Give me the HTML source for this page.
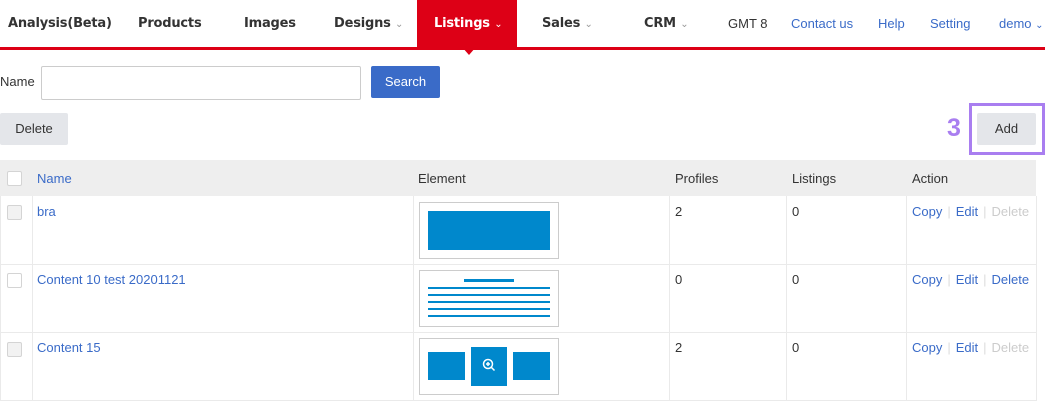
<!DOCTYPE html>
<html><head><meta charset="utf-8"><style>
*{margin:0;padding:0;box-sizing:border-box}
body{width:1045px;height:401px;background:#fff;font-family:"Liberation Sans",sans-serif;font-size:13px;color:#333;position:relative;overflow:hidden}
.a{position:absolute;white-space:nowrap}
.nav{font-family:"DejaVu Sans",sans-serif;font-weight:bold;font-size:13px;color:#333;top:16px;letter-spacing:-0.2px}
.car{font-weight:normal;color:#999;font-size:10px}
.lk{color:#3a6bc8;font-size:13px;top:16px}
.hl{position:absolute;background:#eaeaea}
.cb{position:absolute;width:15px;height:15px;border:1px solid #d4d4d4;border-radius:2px;background:#fff}
.cbd{background:#f2f2f2}
.th{position:absolute;border:1px solid #ccc;background:#fff;width:140px;height:57px}
.b{position:absolute;background:#0088cc}
.ac{color:#3a6bc8}
.sep{color:#ddd;margin:0 5px}
.dis{color:#ccc}
</style></head><body>
<div class="a nav" style="left:8px">Analysis(Beta)</div>
<div class="a nav" style="left:138px">Products</div>
<div class="a nav" style="left:244px">Images</div>
<div class="a nav" style="left:334px">Designs <span class="car">&#8964;</span></div>
<div class="a" style="left:417px;top:0;width:100px;height:48px;background:#dd0016"></div>
<div class="a" style="left:462px;top:47px;width:0;height:0;border-left:7px solid transparent;border-right:7px solid transparent;border-top:8px solid #dd0016"></div>
<div class="a nav" style="left:434px;color:#fff">Listings <span style="font-size:10px;font-weight:normal">&#8964;</span></div>
<div class="a nav" style="left:542px">Sales <span class="car">&#8964;</span></div>
<div class="a nav" style="left:644px">CRM <span class="car">&#8964;</span></div>
<div class="a" style="left:728px;top:16px;color:#333">GMT 8</div>
<div class="a lk" style="left:791px">Contact us</div>
<div class="a lk" style="left:878px">Help</div>
<div class="a lk" style="left:930px">Setting</div>
<div class="a lk" style="left:999px">demo <span style="font-size:10px">&#8964;</span></div>
<div class="a" style="left:0;top:47px;width:1045px;height:3px;background:#dd0016"></div>
<div class="a" style="left:417px;top:46px;width:100px;height:4px;background:#dd0016"></div>

<div class="a" style="left:0;top:74px">Name</div>
<div class="a" style="left:41px;top:66px;width:320px;height:34px;border:1px solid #ccc;border-radius:2px"></div>
<div class="a" style="left:371px;top:66px;width:69px;height:32px;background:#3a6bc8;color:#fff;text-align:center;line-height:31px;border-radius:2px">Search</div>
<div class="a" style="left:0;top:113px;width:68px;height:32px;background:#e4e6ea;text-align:center;line-height:32px;border-radius:2px">Delete</div>
<div class="a" style="left:947px;top:114px;color:#a97ef0;font-size:25px;font-weight:bold;line-height:28px">3</div>
<div class="a" style="left:969px;top:103px;width:76px;height:52px;border:3px solid #a97ef0"></div>
<div class="a" style="left:977px;top:113px;width:59px;height:32px;background:#e4e6ea;text-align:center;line-height:32px;border-radius:2px">Add</div>

<div class="a" style="left:0;top:160px;width:1036px;height:36px;background:#eee"></div>
<div class="cb" style="left:7px;top:171px"></div>
<div class="a ac" style="left:37px;top:171px">Name</div>
<div class="a" style="left:418px;top:171px">Element</div>
<div class="a" style="left:675px;top:171px">Profiles</div>
<div class="a" style="left:792px;top:171px">Listings</div>
<div class="a" style="left:912px;top:171px">Action</div>

<div class="hl" style="left:0;top:264px;width:1036px;height:1px"></div>
<div class="hl" style="left:0;top:332px;width:1036px;height:1px"></div>
<div class="hl" style="left:0;top:400px;width:1036px;height:1px"></div>
<div class="hl" style="left:0;top:196px;width:1px;height:205px"></div>
<div class="hl" style="left:32px;top:196px;width:1px;height:205px"></div>
<div class="hl" style="left:413px;top:196px;width:1px;height:205px"></div>
<div class="hl" style="left:669px;top:196px;width:1px;height:205px"></div>
<div class="hl" style="left:786px;top:196px;width:1px;height:205px"></div>
<div class="hl" style="left:906px;top:196px;width:1px;height:205px"></div>
<div class="hl" style="left:1036px;top:196px;width:1px;height:205px"></div>

<div class="cb cbd" style="left:7px;top:205px"></div>
<div class="a ac" style="left:37px;top:204px">bra</div>
<div class="th" style="left:419px;top:202px"></div>
<div class="b" style="left:428px;top:211px;width:122px;height:39px"></div>
<div class="a" style="left:675px;top:204px">2</div>
<div class="a" style="left:792px;top:204px">0</div>
<div class="a" style="left:912px;top:204px"><span class="ac">Copy</span><span class="sep">|</span><span class="ac">Edit</span><span class="sep">|</span><span class="dis">Delete</span></div>

<div class="cb" style="left:7px;top:273px"></div>
<div class="a ac" style="left:37px;top:272px">Content 10 test 20201121</div>
<div class="th" style="left:419px;top:270px"></div>
<div class="b" style="left:464px;top:279px;width:50px;height:3px"></div>
<div class="b" style="left:428px;top:287px;width:122px;height:2px"></div>
<div class="b" style="left:428px;top:294px;width:122px;height:2px"></div>
<div class="b" style="left:428px;top:301px;width:122px;height:2px"></div>
<div class="b" style="left:428px;top:308px;width:122px;height:2px"></div>
<div class="b" style="left:428px;top:315px;width:122px;height:2px"></div>
<div class="a" style="left:675px;top:272px">0</div>
<div class="a" style="left:792px;top:272px">0</div>
<div class="a" style="left:912px;top:272px"><span class="ac">Copy</span><span class="sep">|</span><span class="ac">Edit</span><span class="sep">|</span><span class="ac">Delete</span></div>

<div class="cb cbd" style="left:7px;top:342px"></div>
<div class="a ac" style="left:37px;top:340px">Content 15</div>
<div class="th" style="left:419px;top:338px"></div>
<div class="b" style="left:428px;top:352px;width:37px;height:28px"></div>
<div class="b" style="left:471px;top:347px;width:36px;height:39px"></div>
<svg class="a" style="left:481px;top:357px" width="16" height="16" viewBox="0 0 16 16"><circle cx="7" cy="7" r="4.5" fill="none" stroke="#fff" stroke-width="1.5"/><path d="M7 5v4M5 7h4M10.5 10.5l3 3" stroke="#fff" stroke-width="1.5"/></svg>
<div class="b" style="left:513px;top:352px;width:37px;height:28px"></div>
<div class="a" style="left:675px;top:340px">2</div>
<div class="a" style="left:792px;top:340px">0</div>
<div class="a" style="left:912px;top:340px"><span class="ac">Copy</span><span class="sep">|</span><span class="ac">Edit</span><span class="sep">|</span><span class="dis">Delete</span></div>
</body></html>
